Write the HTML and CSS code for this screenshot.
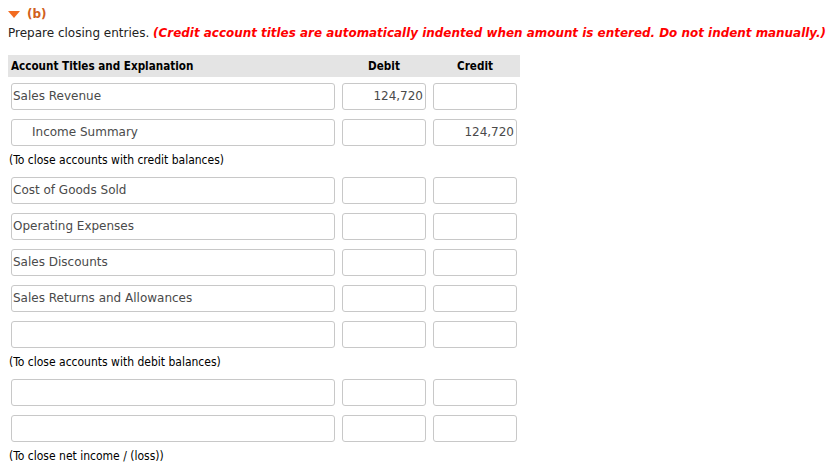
FILE: index.html
```html
<!DOCTYPE html>
<html>
<head>
<meta charset="utf-8">
<link rel="stylesheet" href="styles.css">
</head>
<body>
<div class="page">
  <div class="part">
    <svg class="caret" width="12" height="8" viewBox="0 0 12 8"><polygon points="0,0 12,0 6,7" fill="#f26b21"/></svg>
    <span class="part-label">(b)</span>
  </div>
  <p class="instr">Prepare closing entries. <em>(Credit account titles are automatically indented when amount is entered. Do not indent manually.)</em></p>

  <div class="head">
    <span class="h-title">Account Titles and Explanation</span>
    <span class="h-amt">Debit</span>
    <span class="h-amt">Credit</span>
  </div>

  <div class="grid">
    <div class="box">Sales Revenue</div><div class="box num">124,720</div><div class="box"></div>
    <div class="box indent">Income Summary</div><div class="box"></div><div class="box num">124,720</div>
    <div class="expl">(To close accounts with credit balances)</div>

    <div class="box">Cost of Goods Sold</div><div class="box"></div><div class="box"></div>
    <div class="box">Operating Expenses</div><div class="box"></div><div class="box"></div>
    <div class="box">Sales Discounts</div><div class="box"></div><div class="box"></div>
    <div class="box">Sales Returns and Allowances</div><div class="box"></div><div class="box"></div>
    <div class="box"></div><div class="box"></div><div class="box"></div>
    <div class="expl">(To close accounts with debit balances)</div>

    <div class="box"></div><div class="box"></div><div class="box"></div>
    <div class="box"></div><div class="box"></div><div class="box"></div>
    <div class="expl">(To close net income / (loss))</div>
  </div>
</div>
</body>
</html>
```

FILE: styles.css
```css
html, body {
  margin: 0;
  padding: 0;
  background: #fff;
}
.page {
  padding: 8px 8px 0 8px;
  font-family: "DejaVu Sans", Verdana, sans-serif;
  color: #000;
}
.part {
  display: flex;
  align-items: center;
  gap: 7px;
  height: 12px;
}
.caret {
  display: block;
  margin-top: 1px;
}
.part-label {
  color: #d1601c;
  font-weight: bold;
  font-size: 12px;
  line-height: 12px;
}
.instr {
  margin: 6px 0 0 0;
  font-size: 12px;
  line-height: 15px;
  color: #222;
  white-space: nowrap;
}
.instr em {
  color: #f00;
  font-weight: bold;
  font-style: italic;
  font-size: 11.95px;
}
.head {
  margin-top: 14px;
  width: 512px;
  height: 22px;
  background: #e4e4e4;
  display: grid;
  grid-template-columns: 327px 91px 91px;
  align-items: center;
  font-family: "DejaVu Sans Condensed", "DejaVu Sans", sans-serif;
  font-stretch: condensed;
  font-size: 11.6px;
  font-weight: bold;
}
.h-title {
  padding-left: 3px;
}
.h-amt {
  text-align: center;
  padding-left: 7px;
}
.grid {
  margin: 6px 0 0 3px;
  display: grid;
  grid-template-columns: 324px 84px 84px;
  column-gap: 7px;
  row-gap: 9px;
}
.box {
  height: 27px;
  box-sizing: border-box;
  border: 1px solid #c8c8c8;
  border-radius: 3px;
  padding: 0 2px 0 1px;
  font-size: 12px;
  line-height: 25px;
  color: #4a4a4a;
  white-space: nowrap;
  overflow: hidden;
}
.box.num {
  text-align: right;
}
.box.indent {
  padding-left: 20px;
}
.expl {
  grid-column: 1 / -1;
  margin-left: -2px;
  font-family: "DejaVu Sans Condensed", "DejaVu Sans", sans-serif;
  font-stretch: condensed;
  font-size: 12px;
  line-height: 13px;
  height: 13px;
  margin-top: -1px;
  margin-bottom: 1px;
  color: #000;
}
```
